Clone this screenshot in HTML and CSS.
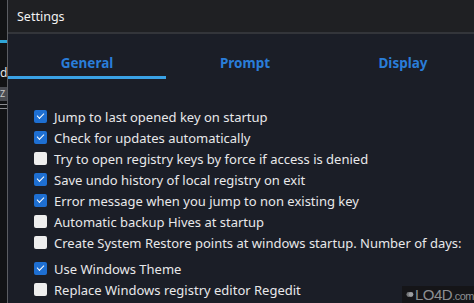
FILE: index.html
```html
<!DOCTYPE html>
<html lang="en">
<head>
    <meta charset="UTF-8">
    <title>Settings</title>
    <link rel="stylesheet" href="styles.css">
</head>
<body>

<div id="screen">
    <div id="behind">
        <div class="behind-top"></div>
        <div class="behind-bar"></div>
        <div class="behind-letter">d</div>
        <div class="behind-chip">Z</div>
        <div class="behind-rule"></div>
        <div class="behind-rule"></div>
    </div>

    <div id="window">
        <div id="title-bar">Settings</div>

        <div id="tabs">
            <div class="tab tab-active">General</div>
            <div class="tab">Prompt</div>
            <div class="tab">Display</div>
        </div>

        <div id="options">
            <div class="option"><span class="box checked"></span>Jump to last opened key on startup</div>
            <div class="option"><span class="box checked"></span>Check for updates automatically</div>
            <div class="option"><span class="box"></span>Try to open registry keys by force if access is denied</div>
            <div class="option"><span class="box checked"></span>Save undo history of local registry on exit</div>
            <div class="option"><span class="box checked"></span>Error message when you jump to non existing key</div>
            <div class="option"><span class="box"></span>Automatic backup Hives at startup</div>
            <div class="option"><span class="box"></span>Create System Restore points at windows startup. Number of days:</div>
            <div class="option group-start"><span class="box checked"></span>Use Windows Theme</div>
            <div class="option"><span class="box"></span>Replace Windows registry editor Regedit</div>
        </div>
    </div>

    <div id="watermark">
        <svg width="20" height="15" viewBox="0 0 20 15">
            <circle cx="7" cy="7.5" r="6" fill="#75777a"/>
            <circle cx="12.5" cy="7.5" r="6" fill="#9c9ea1"/>
        </svg>
        <span>LO4D<small>.com</small></span>
    </div>
</div>

</body>
</html>
```

FILE: styles.css
```css
body {
    margin: 0;
    padding: 0;
    background-color: #111214;
    overflow: hidden;
    font-family: "Noto Sans", "Open Sans", sans-serif;
}

#screen {
    position: relative;
    width: 474px;
    height: 303px;
    display: flex;
    overflow: hidden;
}

#behind {
    width: 7px;
    flex-shrink: 0;
    display: flex;
    flex-direction: column;
    background-color: #121315;
}

.behind-top {
    height: 40px;
}

.behind-bar {
    height: 3px;
    background-color: #2fa6d8;
}

.behind-letter {
    height: 20px;
    margin-top: 20px;
    line-height: 20px;
    font-size: 12px;
    color: #e4e4e4;
}

.behind-chip {
    height: 14px;
    margin-top: 4px;
    line-height: 14px;
    font-size: 9px;
    color: #c9c9c9;
    background-color: #4a4c52;
}

.behind-rule {
    height: 1px;
    margin-top: 3px;
    background-color: #8a8c90;
}

#window {
    flex: 1;
    display: flex;
    flex-direction: column;
    border-left: 1px solid #5b5d62;
    background-color: #1b1e27;
}

#title-bar {
    height: 32px;
    line-height: 34px;
    padding-left: 9px;
    font-size: 12.5px;
    color: #f2f2f2;
    background-color: #1f2023;
    border-bottom: 2px solid #33353a;
}

#tabs {
    display: flex;
    height: 45px;
}

.tab {
    width: 158px;
    flex-shrink: 0;
    height: 42px;
    line-height: 58px;
    text-align: center;
    font-size: 13.5px;
    font-weight: bold;
    color: #2a7dd8;
}

.tab-active {
    border-bottom: 3px solid #3aa2e6;
}

#options {
    padding: 27px 0 0 26px;
}

.option {
    height: 21px;
    display: flex;
    align-items: center;
    font-size: 13px;
    color: #e8e8ea;
    white-space: nowrap;
}

.group-start {
    margin-top: 5px;
}

.box {
    width: 13px;
    height: 13px;
    margin-right: 7px;
    border-radius: 2px;
    background-color: #eeeeee;
    flex-shrink: 0;
    position: relative;
}

.box.checked {
    background-color: #1e6fd2;
}

.box.checked::after {
    content: "";
    position: absolute;
    left: 3px;
    top: 3px;
    width: 6px;
    height: 3px;
    border-left: 1.5px solid #ffffff;
    border-bottom: 1.5px solid #ffffff;
    transform: rotate(-45deg);
}

#watermark {
    position: absolute;
    right: 0;
    bottom: 0;
    width: 68px;
    height: 17px;
    padding-left: 4px;
    display: flex;
    align-items: center;
    gap: 1px;
    background-color: rgba(20, 20, 22, 0.85);
    color: #8d8f92;
    font-family: "Liberation Sans", sans-serif;
    font-size: 15px;
    letter-spacing: -0.5px;
}

#watermark small {
    font-size: 11px;
}
```
